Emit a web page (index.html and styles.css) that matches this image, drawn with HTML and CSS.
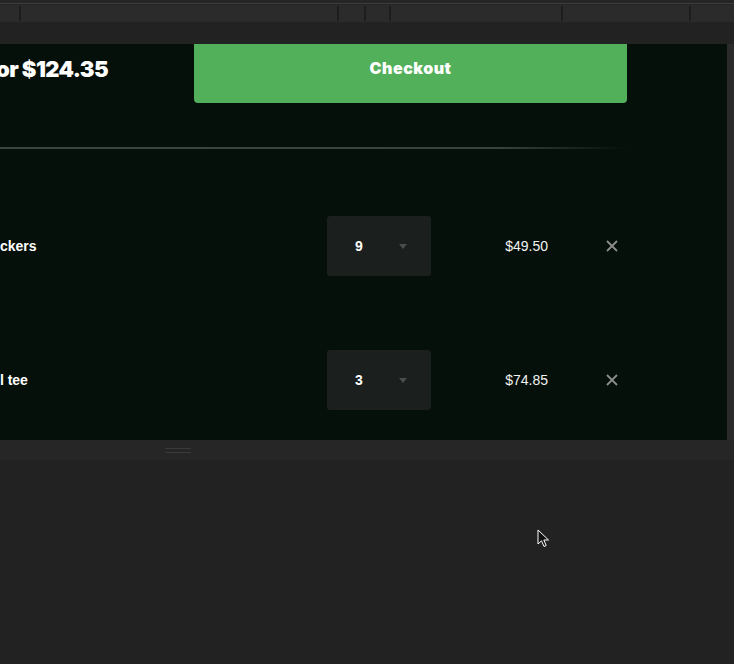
FILE: index.html
```html
<!DOCTYPE html>
<html lang="en">
<head>
    <meta charset="UTF-8">
    <meta name="viewport" content="width=device-width, initial-scale=1.0">
    <title>Cart</title>
    <link rel="stylesheet" href="styles.css">
</head>
<body>

<div class="chrome">
    <div class="tabs">
        <div class="tab" style="width:21px"></div>
        <div class="tab" style="width:318px"></div>
        <div class="tab" style="width:27px"></div>
        <div class="tab" style="width:25px"></div>
        <div class="tab" style="width:172px"></div>
        <div class="tab" style="width:128px"></div>
        <div class="tab tab-last"></div>
    </div>
</div>

<div class="workspace">
    <div class="panel">
        <div class="cart">
            <div class="cart-header">
                <div class="title-box">
                    <h1 class="title">Pay for $124.35</h1>
                </div>
                <button type="button" class="checkout">Checkout</button>
            </div>
            <div class="divider"></div>

            <div class="item">
                <div class="item-name">Stickers</div>
                <div class="qty">
                    <span class="qty-value">9</span>
                    <span class="caret"></span>
                </div>
                <div class="price">$49.50</div>
                <svg class="remove" width="12" height="12" viewBox="0 0 12 12">
                    <path d="M1 1L11 11M11 1L1 11" stroke="#8b8e8c" stroke-width="1.8" fill="none"/>
                </svg>
            </div>

            <div class="item">
                <div class="item-name">Sol tee</div>
                <div class="qty">
                    <span class="qty-value">3</span>
                    <span class="caret"></span>
                </div>
                <div class="price">$74.85</div>
                <svg class="remove" width="12" height="12" viewBox="0 0 12 12">
                    <path d="M1 1L11 11M11 1L1 11" stroke="#8b8e8c" stroke-width="1.8" fill="none"/>
                </svg>
            </div>
        </div>
    </div>
    <div class="side-strip"></div>
</div>

<div class="resize-bar">
    <span class="handle"></span>
</div>

<svg class="cursor" width="13" height="19" viewBox="0 0 13 19">
    <path d="M1 1L1 15L4.5 11.8L7 17.5L9.2 16.5L6.8 11L11.5 11Z" fill="#111" stroke="#fff" stroke-width="1"/>
</svg>

</body>
</html>
```

FILE: styles.css
```css
body {
    margin: 0;
    background-color: #222222;
    font-family: "Liberation Sans", Arial, sans-serif;
    width: 734px;
    height: 664px;
    overflow: hidden;
    position: relative;
}
.chrome {
    height: 22px;
    background-color: #252525;
    border-top: 3px solid #262626;
    box-sizing: border-box;
    padding-top: 2px;
    position: relative;
}
.chrome::before {
    content: "";
    position: absolute;
    left: 0;
    right: 0;
    top: 0;
    height: 1px;
    background-color: #3d3d3d;
}
.tabs {
    display: flex;
    height: 17px;
    background-color: #2b2b2b;
    padding: 1px 0;
    box-sizing: border-box;
}
.tab {
    flex: none;
    box-sizing: border-box;
    border-right: 2px solid #1d1d1d;
}
.tab-last {
    flex: 1;
    border-right: none;
}
.workspace {
    display: flex;
    margin-top: 22px;
    height: 396px;
}
.panel {
    width: 727px;
    background-color: #06100a;
    overflow: hidden;
}
.side-strip {
    flex: 1;
    background-color: #2b2b2b;
}
.cart {
    width: 645px;
    margin-left: -18px;
    margin-top: -10px;
}
.cart-header {
    display: flex;
    align-items: center;
}
.title-box {
    width: 126px;
    display: flex;
    justify-content: flex-end;
    white-space: nowrap;
}
.title {
    margin: 0;
    color: #fff;
    font-family: Inter, sans-serif;
    font-weight: 900;
    font-size: 22px;
    letter-spacing: -0.6px;
}
.checkout {
    margin-left: 86px;
    width: 433px;
    height: 69px;
    border: none;
    border-radius: 4px;
    background-color: #52b05a;
    color: #fff;
    font-family: Inter, sans-serif;
    font-weight: 900;
    font-size: 16px;
    letter-spacing: 0.5px;
    padding: 0 0 2px;
}
.divider {
    height: 2px;
    margin-top: 44px;
    background: linear-gradient(to right, #3a463e 0%, #38433b 80%, rgba(56, 67, 59, 0) 100%);
}
.item {
    display: grid;
    grid-template-columns: 345px 104px 117px 70px;
    align-items: center;
    height: 60px;
    margin-top: 74px;
}
.divider + .item {
    margin-top: 67px;
}
.item-name {
    color: #fff;
    font-weight: bold;
    font-size: 14px;
    white-space: nowrap;
}
.qty {
    height: 60px;
    background-color: #1b1f1d;
    border-radius: 3px;
    display: flex;
    align-items: center;
    padding: 0 24px 0 28px;
}
.qty-value {
    color: #fff;
    font-weight: bold;
    font-size: 14px;
}
.caret {
    margin-left: auto;
    width: 0;
    height: 0;
    border-left: 4px solid transparent;
    border-right: 4px solid transparent;
    border-top: 5px solid #4a4e4c;
}
.price {
    text-align: right;
    color: #f2f2f2;
    font-size: 14px;
}
.remove {
    display: block;
    justify-self: end;
}
.resize-bar {
    height: 20px;
    background-color: #262626;
    position: relative;
}
.handle {
    position: absolute;
    left: 165px;
    top: 8px;
    width: 26px;
    height: 1px;
    border-top: 1px solid #3a3a3a;
    border-bottom: 1px solid #3a3a3a;
    padding-top: 2px;
    box-sizing: content-box;
}
.cursor {
    position: absolute;
    left: 537px;
    top: 529px;
}
```
